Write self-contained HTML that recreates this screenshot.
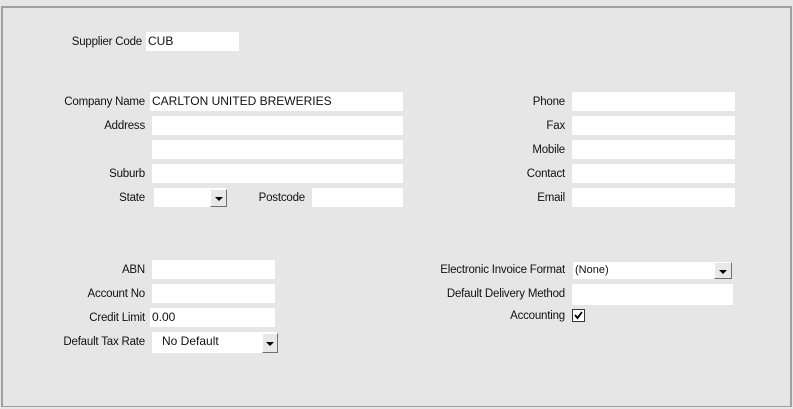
<!DOCTYPE html>
<html><head><meta charset="utf-8"><style>
*{margin:0;padding:0;box-sizing:border-box}
body{width:793px;height:409px;background:#e6e6e6;position:relative;overflow:hidden;font-family:"Liberation Sans",sans-serif;font-size:11.5px;color:#111}
.frame{position:absolute;left:1px;top:6px;width:791px;height:401px;border-top:2px solid #a0a0a0;border-left:2px solid #a0a0a0;border-right:2px solid #a0a0a0;border-bottom:1px solid #a0a0a0}
.l{position:absolute;text-align:right;white-space:nowrap;letter-spacing:-0.2px}
.i{position:absolute;background:#fff;font-size:12px;padding-left:2px;line-height:19px;white-space:nowrap}
.b{position:absolute;background:#e8e8e8;border:1px solid;border-color:#fff #707070 #707070 #fff}
.b:after{content:"";position:absolute;left:50%;top:50%;margin-left:-4px;margin-top:-1px;border-left:4px solid transparent;border-right:4px solid transparent;border-top:4px solid #000}
</style></head><body>
<div class="frame"></div>
<div class="l" style="right:651px;top:36px">Supplier Code</div>
<div class="i" style="left:146px;top:32px;width:93px;height:19px">CUB</div>

<div class="l" style="right:648px;top:96px">Company Name</div>
<div class="i" style="left:150px;top:92px;width:253px;height:19px">CARLTON UNITED BREWERIES</div>
<div class="l" style="right:648px;top:120px">Address</div>
<div class="i" style="left:152px;top:116px;width:251px;height:19px"></div>
<div class="i" style="left:152px;top:140px;width:251px;height:19px"></div>
<div class="l" style="right:648px;top:168px">Suburb</div>
<div class="i" style="left:152px;top:164px;width:251px;height:19px"></div>
<div class="l" style="right:648px;top:192px">State</div>
<div class="i" style="left:154px;top:188px;width:73px;height:19px"></div>
<div class="b" style="left:210px;top:189px;width:17px;height:18px"></div>
<div class="l" style="right:488px;top:192px">Postcode</div>
<div class="i" style="left:312px;top:188px;width:91px;height:19px"></div>

<div class="l" style="right:228px;top:96px">Phone</div>
<div class="i" style="left:572px;top:92px;width:163px;height:19px"></div>
<div class="l" style="right:228px;top:120px">Fax</div>
<div class="i" style="left:572px;top:116px;width:163px;height:19px"></div>
<div class="l" style="right:228px;top:144px">Mobile</div>
<div class="i" style="left:572px;top:140px;width:163px;height:19px"></div>
<div class="l" style="right:228px;top:168px">Contact</div>
<div class="i" style="left:572px;top:164px;width:163px;height:19px"></div>
<div class="l" style="right:228px;top:192px">Email</div>
<div class="i" style="left:572px;top:188px;width:163px;height:19px"></div>

<div class="l" style="right:648px;top:264px">ABN</div>
<div class="i" style="left:152px;top:260px;width:123px;height:19px"></div>
<div class="l" style="right:648px;top:288px">Account No</div>
<div class="i" style="left:152px;top:284px;width:123px;height:19px"></div>
<div class="l" style="right:648px;top:312px">Credit Limit</div>
<div class="i" style="left:150px;top:308px;width:125px;height:19px">0.00</div>
<div class="l" style="right:648px;top:336px">Default Tax Rate</div>
<div class="i" style="left:152px;top:332px;width:125px;height:21px;padding-left:10px;line-height:19px">No Default</div>
<div class="b" style="left:262px;top:333px;width:16px;height:20px"></div>

<div class="l" style="right:228px;top:264px">Electronic Invoice Format</div>
<div class="i" style="left:573px;top:262px;width:159px;height:17px;font-size:11px;line-height:17px">(None)</div>
<div class="b" style="left:714px;top:262px;width:18px;height:17px"></div>
<div class="l" style="right:228px;top:288px">Default Delivery Method</div>
<div class="i" style="left:572px;top:284px;width:161px;height:21px"></div>
<div class="l" style="right:228px;top:310px">Accounting</div>
<div style="position:absolute;left:572px;top:309px;width:13px;height:13px;background:#fff;border:1px solid #333"><svg width="11" height="11" style="position:absolute;left:0;top:0"><path d="M2 5 L4.5 8 L9 2" stroke="#000" stroke-width="1.8" fill="none"/></svg></div>
</body></html>
